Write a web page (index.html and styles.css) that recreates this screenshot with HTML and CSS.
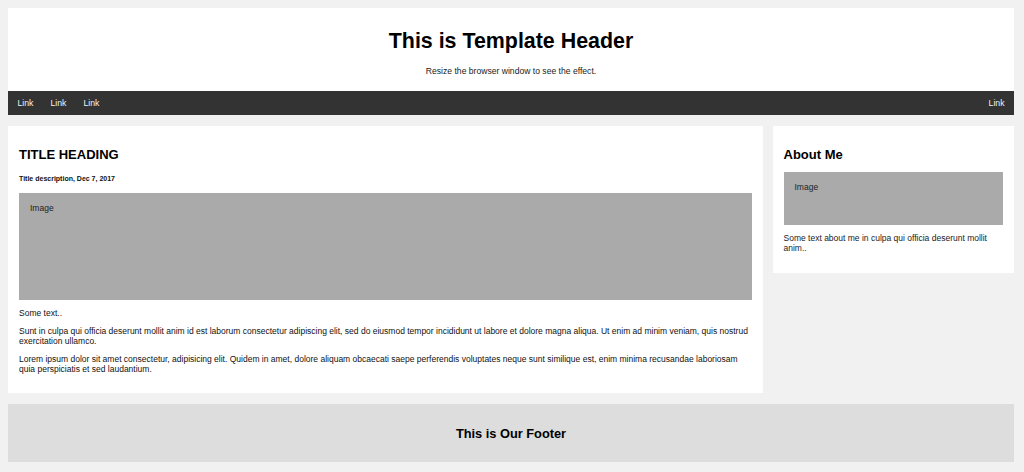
FILE: index.html
```html
<!DOCTYPE html>
<html>
<head>
<meta charset="utf-8">
<link rel="stylesheet" href="styles.css">
</head>
<body>
<div class="header">
  <h1>This is Template Header</h1>
  <p>Resize the browser window to see the effect.</p>
</div>
<div class="topnav">
  <a href="#">Link</a>
  <a href="#">Link</a>
  <a href="#">Link</a>
  <a href="#" class="right">Link</a>
</div>
<div class="row">
  <div class="leftcolumn">
    <div class="card">
      <h2>TITLE HEADING</h2>
      <h5>Title description, Dec 7, 2017</h5>
      <div class="fakeimg big">Image</div>
      <p>Some text..</p>
      <p>Sunt in culpa qui officia deserunt mollit anim id est laborum consectetur adipiscing elit, sed do eiusmod tempor incididunt ut labore et dolore magna aliqua. Ut enim ad minim veniam, quis nostrud exercitation ullamco.</p>
      <p>Lorem ipsum dolor sit amet consectetur, adipisicing elit. Quidem in amet, dolore aliquam obcaecati saepe perferendis voluptates neque sunt similique est, enim minima recusandae laboriosam quia perspiciatis et sed laudantium.</p>
    </div>
  </div>
  <div class="rightcolumn">
    <div class="card">
      <h2>About Me</h2>
      <div class="fakeimg small">Image</div>
      <p class="about">Some text about me in culpa qui officia deserunt mollit anim..</p>
    </div>
  </div>
</div>
<div class="footer">
  <h2>This is Our Footer</h2>
</div>
</body>
</html>
```
FILE: styles.css
```css
* { box-sizing: border-box; }
body {
  margin: 8px 10px 8px 8px;
  background: #f1f1f1;
  font-family: "Liberation Sans", Arial, sans-serif;
  font-size: 8.5px;
  color: #111;
}
.header {
  background: #fff;
  height: 83px;
  padding-top: 21px;
  text-align: center;
}
.header h1 {
  margin: 0;
  font-size: 21.4px;
  line-height: 25px;
  color: #000;
}
.header p {
  margin: 12px 0 0;
  font-size: 8.6px;
  line-height: 11px;
  color: #222;
}
.topnav {
  background: #333;
  height: 24px;
  display: flex;
  padding-left: 1px;
  padding-right: 1px;
}
.topnav a {
  color: #f2f2f2;
  text-decoration: none;
  font-size: 8.7px;
  line-height: 24px;
  padding: 0 8.5px;
}
.topnav a.right { margin-left: auto; }
.row {
  display: flex;
}
.leftcolumn { width: 75%; }
.rightcolumn { width: 25%; padding-left: 10px; }
.card {
  background: #fff;
  padding: 11px;
  margin-top: 11px;
}
.card h2 {
  margin: 10px 0 0;
  font-size: 13px;
  line-height: 15px;
  color: #000;
}
.card h5 {
  margin: 12px 0 0;
  font-size: 7px;
  line-height: 9px;
}
.leftcolumn .fakeimg { margin-top: 10px; }
.fakeimg {
  background: #aaa;
  width: 100%;
  padding: 11px;
  line-height: 9px;
  color: #222;
}
.fakeimg.big { height: 107px; }
.fakeimg.small { height: 53px; margin-top: 10px; }
.card p {
  margin: 8px 0;
  line-height: 10px;
}
.card p.about { margin-top: 8px; margin-bottom: 9px; color: #222; }
.footer {
  background: #ddd;
  margin-top: 11px;
  height: 58px;
  display: flex;
  align-items: center;
  justify-content: center;
}
.footer h2 {
  margin: 0;
  font-size: 12.8px;
  color: #000;
}
```
